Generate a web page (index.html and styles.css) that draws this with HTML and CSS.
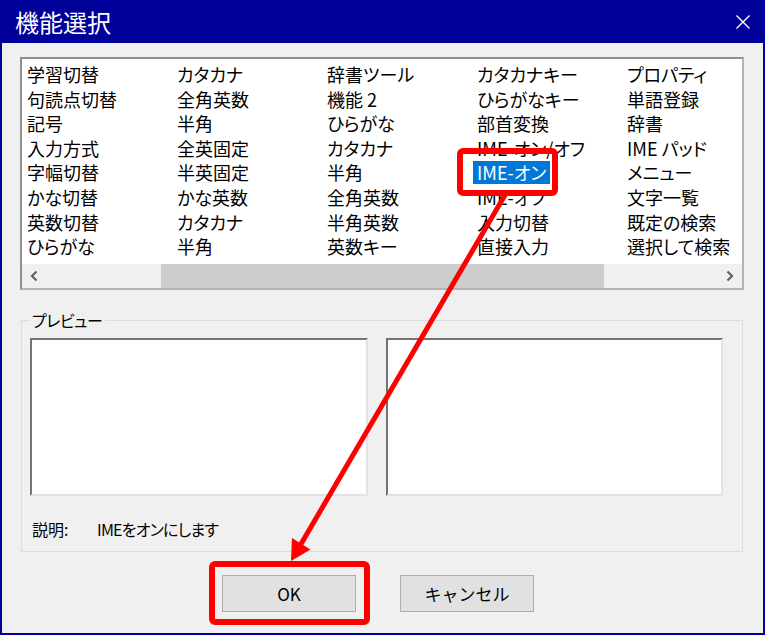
FILE: index.html
```html
<!DOCTYPE html>
<html lang="ja">
<head>
<meta charset="utf-8">
<title>機能選択</title>
<link rel="stylesheet" href="styles.css">
</head>
<body>
<div class="window">
  <div class="titlebar">
    <span class="title">機能選択</span>
    <svg class="close" width="16" height="16" viewBox="0 0 16 16"><path d="M1.5 1.5L14.5 14.5M14.5 1.5L1.5 14.5"/></svg>
  </div>
  <div class="body">
    <div class="listbox">
      <div class="grid">
        <div class="cell">学習切替</div>
        <div class="cell">句読点切替</div>
        <div class="cell">記号</div>
        <div class="cell">入力方式</div>
        <div class="cell">字幅切替</div>
        <div class="cell">かな切替</div>
        <div class="cell">英数切替</div>
        <div class="cell">ひらがな</div>
        <div class="cell">カタカナ</div>
        <div class="cell">全角英数</div>
        <div class="cell">半角</div>
        <div class="cell">全英固定</div>
        <div class="cell">半英固定</div>
        <div class="cell">かな英数</div>
        <div class="cell">カタカナ</div>
        <div class="cell">半角</div>
        <div class="cell">辞書ツール</div>
        <div class="cell">機能 2</div>
        <div class="cell">ひらがな</div>
        <div class="cell">カタカナ</div>
        <div class="cell">半角</div>
        <div class="cell">全角英数</div>
        <div class="cell">半角英数</div>
        <div class="cell">英数キー</div>
        <div class="cell">カタカナキー</div>
        <div class="cell">ひらがなキー</div>
        <div class="cell">部首変換</div>
        <div class="cell">IME-オン/オフ</div>
        <div class="cell"><span class="sel">IME-オン</span></div>
        <div class="cell">IME-オフ</div>
        <div class="cell">入力切替</div>
        <div class="cell">直接入力</div>
        <div class="cell">プロパティ</div>
        <div class="cell">単語登録</div>
        <div class="cell">辞書</div>
        <div class="cell">IME パッド</div>
        <div class="cell">メニュー</div>
        <div class="cell">文字一覧</div>
        <div class="cell">既定の検索</div>
        <div class="cell">選択して検索</div>
      </div>
      <div class="scrollbar">
        <div class="sbtn"><svg width="10" height="12" viewBox="0 0 10 12"><path d="M7.5 1.5L3 6L7.5 10.5"/></svg></div>
        <div class="track"><div class="thumb"></div></div>
        <div class="sbtn"><svg width="10" height="12" viewBox="0 0 10 12"><path d="M2.5 1.5L7 6L2.5 10.5"/></svg></div>
      </div>
    </div>
    <fieldset class="group">
      <legend class="legend">プレビュー</legend>
      <div class="previews">
        <div class="pbox pbox-left"></div>
        <div class="pbox pbox-right"></div>
      </div>
      <div class="desc">
        <span class="desc-label">説明:</span>
        <span class="desc-text">IMEをオンにします</span>
      </div>
    </fieldset>
    <div class="buttons">
      <button class="btn">OK</button>
      <button class="btn">キャンセル</button>
    </div>
  </div>
</div>
<svg class="overlay" width="765" height="635" viewBox="0 0 765 635">
  <rect class="mark" x="460" y="151" width="95" height="42" rx="3"/>
  <rect class="mark" x="212" y="564" width="155" height="58" rx="3"/>
  <line class="arrow-line" x1="505" y1="195" x2="301" y2="544"/>
  <polygon class="arrow-head" points="291,561 310.5,549.5 292,538"/>
</svg>
</body>
</html>
```
FILE: styles.css
```css
* { box-sizing: border-box; }
html, body { margin: 0; padding: 0; }
body {
  position: relative;
  width: 765px;
  height: 635px;
  overflow: hidden;
  background: #f0f0f0;
  color: #000;
  font-family: "Noto Sans CJK JP", "Noto Sans", sans-serif;
  font-feature-settings: "palt";
}
.window {
  width: 765px;
  height: 635px;
  background: #f0f0f0;
  border: 2px solid #00009a;
  border-top: 0;
  display: flex;
  flex-direction: column;
}
.titlebar {
  height: 43px;
  flex: none;
  background: #00009a;
  color: #fff;
  display: flex;
  align-items: center;
  justify-content: space-between;
  padding: 0 12px 0 13px;
}
.title {
  font-size: 24px;
  line-height: 1;
}
.close path {
  stroke: #fff;
  stroke-width: 1.4;
  fill: none;
}
.body {
  padding: 14px 0 0 18px;
}
.listbox {
  width: 724px;
  border: 2px solid;
  border-color: #8f8f8f #b4b4b4 #b4b4b4 #8f8f8f;
  background: #fff;
}
.grid {
  display: grid;
  grid-template-columns: repeat(5, 150px);
  grid-template-rows: repeat(8, 24.6px);
  grid-auto-flow: column;
  height: 205px;
  padding: 3px 0 0 5px;
  font-size: 18px;
}
.cell {
  line-height: 24.6px;
  white-space: nowrap;
}
.sel {
  display: inline-block;
  line-height: 23px;
  margin-left: -4px;
  padding: 0 4px 0 4px;
  background: #0078d7;
  color: #fff;
  outline: 1px dotted #7a5a20;
  outline-offset: -1px;
}
.scrollbar {
  height: 24px;
  display: flex;
  background: #f0f0f0;
}
.sbtn {
  width: 24px;
  flex: none;
  display: flex;
  align-items: center;
  justify-content: center;
}
.sbtn path {
  fill: none;
  stroke: #606060;
  stroke-width: 2.2;
}
.track { flex: 1; }
.thumb {
  margin-left: 115px;
  width: 443px;
  height: 100%;
  background: #cdcdcd;
}
.group {
  margin: 18px 0 0 1px;
  width: 722px;
  height: 244px;
  border: 1px solid #dcdcdc;
  padding: 6px 0 0 8px;
  min-inline-size: 0;
}
.legend {
  font-size: 16px;
  line-height: 24px;
  padding: 0 3px 0 2px;
  letter-spacing: -0.5px;
}
.previews {
  display: flex;
  gap: 18px;
}
.pbox {
  height: 158px;
  background: #fff;
  border: 2px solid;
  border-color: #747474 #e3e3e3 #e3e3e3 #747474;
}
.pbox-left { width: 338px; }
.pbox-right { width: 337px; }
.desc {
  display: flex;
  margin-top: 22px;
  font-size: 16px;
  line-height: 22px;
  padding-left: 2px;
}
.desc-label { width: 65px; }
.desc-text { letter-spacing: -0.8px; }
.buttons {
  display: flex;
  gap: 44px;
  margin-top: 23px;
  padding-left: 202px;
}
.btn {
  width: 134px;
  height: 37px;
  background: #e1e1e1;
  border: 1px solid #adadad;
  font-family: inherit;
  font-size: 17px;
  color: #000;
  padding: 0;
}
.overlay {
  position: absolute;
  left: 0;
  top: 0;
  pointer-events: none;
}
.mark {
  fill: none;
  stroke: #ff0000;
  stroke-width: 6;
}
.arrow-line {
  stroke: #ff0000;
  stroke-width: 5;
}
.arrow-head { fill: #ff0000; }
```
